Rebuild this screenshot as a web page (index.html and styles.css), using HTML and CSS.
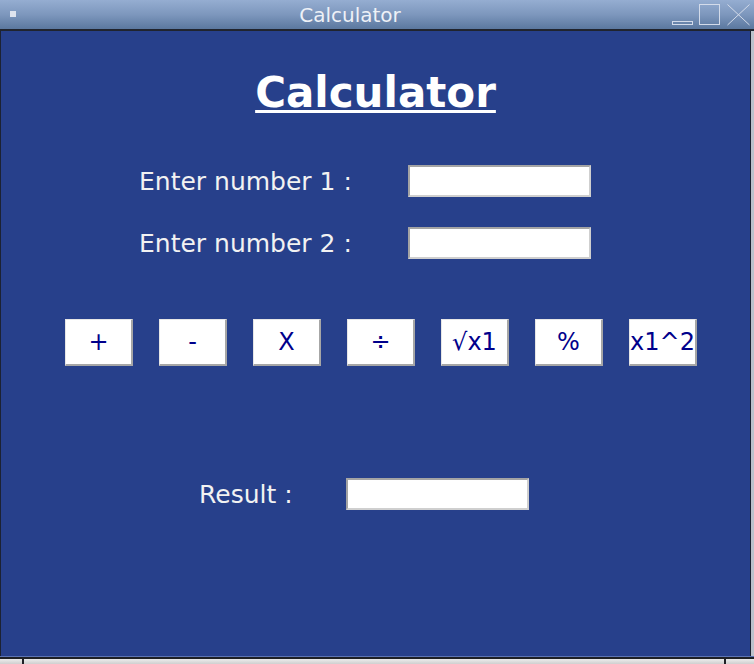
FILE: index.html
```html
<!DOCTYPE html>
<html>
<head>
<meta charset="utf-8">
<title>Calculator</title>
<link rel="stylesheet" href="styles.css">
</head>
<body>
<div class="window">
  <div class="titlebar">
    <div class="tb-left"><span class="tb-menu"></span></div>
    <div class="tb-title">Calculator</div>
    <div class="tb-right">
      <svg class="tb-icons" width="86" height="29" viewBox="0 0 86 29">
        <rect x="4.5" y="21.5" width="20" height="3" fill="none" stroke="#d3dbea" stroke-width="1"/>
        <rect x="31.5" y="4.5" width="20" height="20" fill="none" stroke="#d3dbea" stroke-width="1"/>
        <path d="M59.5 4.5 L81.5 25 M81.5 4.5 L59.5 25" stroke="#d3dbea" stroke-width="1" fill="none"/>
      </svg>
    </div>
  </div>
  <div class="sep"></div>
  <div class="body-row">
    <div class="frame-left"></div>
    <main class="content">
      <h1 class="heading"><span class="heading-text">Calculator</span></h1>
      <div class="field-row first">
        <label class="label">Enter number 1 :</label>
        <input class="entry" type="text">
      </div>
      <div class="field-row second">
        <label class="label">Enter number 2 :</label>
        <input class="entry" type="text">
      </div>
      <div class="buttons">
        <button class="btn">+</button>
        <button class="btn">-</button>
        <button class="btn">X</button>
        <button class="btn">÷</button>
        <button class="btn">√x1</button>
        <button class="btn">%</button>
        <button class="btn">x1^2</button>
      </div>
      <div class="result-row">
        <label class="label result-label">Result :</label>
        <input class="entry" type="text">
      </div>
    </main>
    <div class="frame-right"></div>
  </div>
  <div class="frame-bottom-light"></div>
  <div class="frame-bottom-dark"></div>
  <div class="statusbar">
    <div class="sb-cell sb-a"></div>
    <div class="sb-cell sb-b"></div>
    <div class="sb-cell sb-c"></div>
  </div>
</div>
</body>
</html>
```
FILE: styles.css
```css
* { box-sizing: border-box; }
html, body {
  margin: 0;
  padding: 0;
  width: 754px;
  height: 664px;
  overflow: hidden;
  background: #c8c8c8;
  font-family: "DejaVu Sans", "Liberation Sans", sans-serif;
}
.window {
  width: 754px;
  height: 664px;
  display: flex;
  flex-direction: column;
}
.titlebar {
  height: 29px;
  flex: none;
  display: flex;
  align-items: stretch;
  background: linear-gradient(to bottom, #95add1 0%, #7d97bd 50%, #5b789f 100%);
}
.tb-left {
  width: 30px;
}
.tb-menu {
  display: block;
  width: 6px;
  height: 6px;
  margin: 11px 0 0 10px;
  background: #dfe4ee;
}
.tb-title {
  flex: 1;
  text-align: center;
  color: #eef1f7;
  font-size: 20px;
  line-height: 29px;
  padding-top: 1px;
  padding-left: 2px;
}
.tb-right {
  width: 86px;
}
.tb-icons { display: block; }
.sep {
  height: 2px;
  flex: none;
  background: #20242e;
}
.body-row {
  flex: none;
  height: 625px;
  display: flex;
}
.frame-left {
  width: 1px;
  background: #1c2232;
}
.frame-right {
  width: 4px;
  border-left: 1px solid #1c2232;
  background: #bcc2cc;
}
.content {
  flex: 1;
  background: #27408b;
  padding-top: 37px;
  display: flex;
  flex-direction: column;
}
.heading {
  margin: 0;
  text-align: center;
  font-size: 42px;
  font-weight: bold;
  line-height: 50px;
  color: #ffffff;
}
.heading-text {
  text-decoration: underline;
  text-decoration-thickness: 3px;
  text-underline-offset: 3px;
}
.field-row {
  display: flex;
  align-items: center;
  height: 32px;
  padding-left: 138px;
}
.field-row.first { margin-top: 47px; }
.field-row.second { margin-top: 30px; }
.label {
  color: #f2f2f2;
  font-size: 25px;
  line-height: 32px;
  width: 269px;
  white-space: nowrap;
  padding-top: 1px;
}
.entry {
  width: 183px;
  height: 32px;
  margin: 0;
  padding: 0 4px;
  background: #ffffff;
  border: 2px solid;
  border-color: #a4a4a4 #cfcfcf #cfcfcf #a4a4a4;
  outline: none;
  font-family: "DejaVu Sans", sans-serif;
  font-size: 18px;
}
.buttons {
  display: flex;
  gap: 26px;
  padding-left: 64px;
  margin-top: 60px;
}
.btn {
  width: 68px;
  height: 47px;
  margin: 0;
  padding: 0;
  background: #ffffff;
  border-style: solid;
  border-width: 1px 2px 2px 1px;
  border-color: #e6e6e6 #a6a6a6 #a6a6a6 #e6e6e6;
  color: #00008b;
  font-family: "DejaVu Sans", sans-serif;
  font-size: 24px;
  line-height: 44px;
  overflow: hidden;
  white-space: nowrap;
  display: flex;
  align-items: center;
  justify-content: center;
}
.result-row {
  display: flex;
  align-items: center;
  height: 32px;
  padding-left: 198px;
  margin-top: 112px;
}
.result-label { width: 147px; }
.frame-bottom-light {
  height: 1px;
  flex: none;
  background: #5d74b4;
}
.frame-bottom-dark {
  height: 2px;
  flex: none;
  background: #1e2026;
}
.statusbar {
  flex: 1;
  display: flex;
  background: linear-gradient(to bottom, #ececec, #cfcfcf);
}
.sb-cell { height: 100%; }
.sb-a { width: 24px; border-right: 2px solid #1e2026; }
.sb-b { width: 702px; border-right: 2px solid #1e2026; }
.sb-c { flex: 1; }
```
